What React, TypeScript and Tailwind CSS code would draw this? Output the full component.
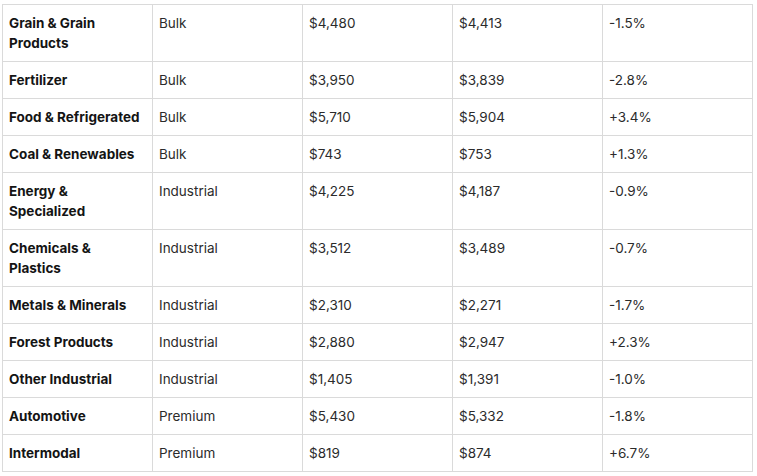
const rows: [string, string, string, string, string][] = [
  ["Grain & Grain Products", "Bulk", "$4,480", "$4,413", "-1.5%"],
  ["Fertilizer", "Bulk", "$3,950", "$3,839", "-2.8%"],
  ["Food & Refrigerated", "Bulk", "$5,710", "$5,904", "+3.4%"],
  ["Coal & Renewables", "Bulk", "$743", "$753", "+1.3%"],
  ["Energy & Specialized", "Industrial", "$4,225", "$4,187", "-0.9%"],
  ["Chemicals & Plastics", "Industrial", "$3,512", "$3,489", "-0.7%"],
  ["Metals & Minerals", "Industrial", "$2,310", "$2,271", "-1.7%"],
  ["Forest Products", "Industrial", "$2,880", "$2,947", "+2.3%"],
  ["Other Industrial", "Industrial", "$1,405", "$1,391", "-1.0%"],
  ["Automotive", "Premium", "$5,430", "$5,332", "-1.8%"],
  ["Intermodal", "Premium", "$819", "$874", "+6.7%"],
];

export default function App() {
  return (
    <div className="bg-white min-h-screen pt-[4px] pl-[2px] font-['Inter',sans-serif] text-[13.5px] leading-5 text-[#1f1f1f]">
      <table className="table-fixed border-collapse w-[750px]">
        <tbody>
          {rows.map((r) => (
            <tr key={r[0]}>
              {r.map((c, i) => (
                <td
                  key={i}
                  className={`w-[150px] border border-[#dadada] pl-[6px] pr-[10px] py-2 align-top ${
                    i === 0 ? "font-bold text-[#141414]" : "text-[#2b2b2b]"
                  }`}
                >
                  {c}
                </td>
              ))}
            </tr>
          ))}
        </tbody>
      </table>
    </div>
  );
}
